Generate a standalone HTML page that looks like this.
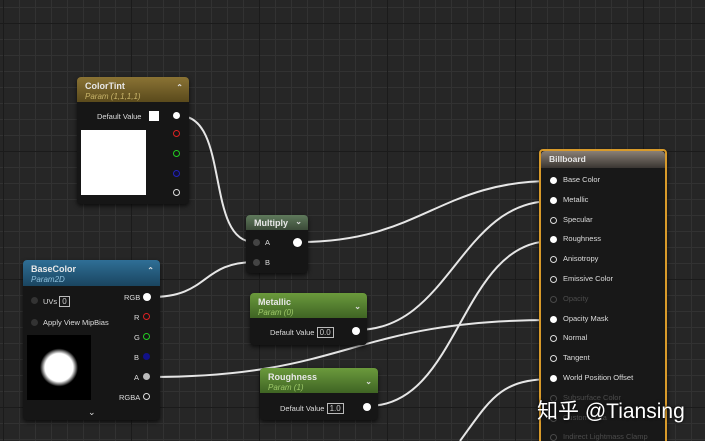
<!DOCTYPE html><html><head><meta charset="utf-8"><style>
html,body{margin:0;width:705px;height:441px;overflow:hidden}
body{background:#262626;font-family:"Liberation Sans",sans-serif;position:relative}
.grid{position:absolute;inset:0;background-image:linear-gradient(#1b1b1b 1px,transparent 1px),linear-gradient(90deg,#1b1b1b 1px,transparent 1px),linear-gradient(#323232 1px,transparent 1px),linear-gradient(90deg,#323232 1px,transparent 1px);background-size:128px 128px,128px 128px,16px 16px,16px 16px;background-position:0 23px,3px 0,0 7px,3px 0}
.n{position:absolute;background:#161616;border-radius:4px;box-shadow:0 2px 4px #000a}
.h{border-radius:4px 4px 0 0;color:#e8e8e8;font-size:9px;font-weight:bold;padding:4px 8px;position:relative}
.h i{display:block;font-style:italic;font-weight:normal;font-size:8px;margin-top:1px}
.t{position:absolute;color:#ddd;font-size:7.5px;white-space:nowrap}
.p{position:absolute;width:7px;height:7px;border-radius:50%;box-sizing:border-box}
.f{background:#fff}.o{border:1.5px solid #ddd}
.box{display:inline-block;border:1px solid #bbb;padding:0 2px;font-size:8px;color:#ccc}
.ch{position:absolute;right:6px;top:6px;color:#ddd;font-size:8px}
</style></head><body><div class="grid"></div>
<svg width="705" height="441" style="position:absolute;left:0;top:0" fill="none" stroke="#e6e6e6" stroke-width="2">
<path d="M180 116 C230 116 205 242 254 242"/>
<path d="M151 297 C210 297 200 262 256 262"/>
<path d="M300 242 C420 242 440 181 552 181"/>
<path d="M357 330 C450 330 460 201 552 201"/>
<path d="M150 377 C350 377 350 320 552 320"/>
<path d="M368 406 C460 406 460 241 552 241"/>
<path d="M460 441 C490 400 500 379 552 379"/>
</svg>
<div class="n" style="left:77px;top:77px;width:112px;height:127px">
<div class="h" style="background:linear-gradient(#8a7334,#5a4a1c);height:17px">ColorTint<i style="color:#c9b56a">Param (1,1,1,1)</i><span class="ch">⌃</span></div>
<div class="t" style="left:20px;top:35px">Default Value</div>
<div style="position:absolute;left:72px;top:34px;width:10px;height:10px;background:#fff"></div>
<div style="position:absolute;left:4px;top:53px;width:65px;height:65px;background:#fff"></div>
<div class="p f" style="left:96px;top:35px"></div>
<div class="p" style="left:96px;top:53px;border:1.5px solid #d22"></div>
<div class="p" style="left:96px;top:73px;border:1.5px solid #2c2"></div>
<div class="p" style="left:96px;top:93px;border:1.5px solid #22b;background:#113"></div>
<div class="p o" style="left:96px;top:112px"></div>
</div>
<div class="n" style="left:246px;top:215px;width:62px;height:58px">
<div class="h" style="background:linear-gradient(#5f7a5c,#3b4a38);height:8px;padding-top:3px">Multiply<span class="ch" style="top:2px">⌄</span></div>
<div class="p" style="left:7px;top:24px;background:#444"></div><div class="t" style="left:19px;top:23px">A</div>
<div class="p" style="left:7px;top:44px;background:#444"></div><div class="t" style="left:19px;top:43px">B</div>
<div class="p f" style="left:47px;top:23px;width:9px;height:9px"></div>
</div>
<div class="n" style="left:23px;top:260px;width:137px;height:160px">
<div class="h" style="background:linear-gradient(#2f6f96,#1a4560);height:18px">BaseColor<i style="color:#8fc1dd">Param2D</i><span class="ch">⌃</span></div>
<div class="p" style="left:8px;top:37px;background:#333"></div><div class="t" style="left:20px;top:36px">UVs <span class="box">0</span></div>
<div class="p" style="left:8px;top:59px;background:#333"></div><div class="t" style="left:20px;top:58px">Apply View MipBias</div>
<div style="position:absolute;left:4px;top:75px;width:64px;height:65px;background:radial-gradient(circle at 50% 50%,#fff 0 14px,#000 19px)"></div>
<div class="t" style="left:101px;top:33px">RGB</div><div class="p f" style="left:120px;top:33px;width:8px;height:8px"></div>
<div class="t" style="left:111px;top:53px">R</div><div class="p" style="left:120px;top:53px;border:1.5px solid #d22"></div>
<div class="t" style="left:111px;top:73px">G</div><div class="p" style="left:120px;top:73px;border:1.5px solid #2c2"></div>
<div class="t" style="left:111px;top:93px">B</div><div class="p" style="left:120px;top:93px;background:#118"></div>
<div class="t" style="left:111px;top:113px">A</div><div class="p" style="left:120px;top:113px;background:#bbb"></div>
<div class="t" style="left:96px;top:133px">RGBA</div><div class="p o" style="left:120px;top:133px"></div>
<div class="t" style="left:65px;top:147px;font-size:9px">⌄</div>
</div>
<div class="n" style="left:250px;top:293px;width:117px;height:52px">
<div class="h" style="background:linear-gradient(#6b9a3c,#3f6424);height:17px">Metallic<i style="color:#9fca6a">Param (0)</i><span class="ch" style="top:9px">⌄</span></div>
<div class="t" style="left:20px;top:34px">Default Value <span class="box">0.0</span></div>
<div class="p f" style="left:102px;top:34px;width:8px;height:8px"></div>
</div>
<div class="n" style="left:260px;top:368px;width:118px;height:52px">
<div class="h" style="background:linear-gradient(#6b9a3c,#3f6424);height:17px">Roughness<i style="color:#9fca6a">Param (1)</i><span class="ch" style="top:9px">⌄</span></div>
<div class="t" style="left:20px;top:35px">Default Value <span class="box">1.0</span></div>
<div class="p f" style="left:103px;top:35px;width:8px;height:8px"></div>
</div>
<div class="n" style="left:539px;top:149px;width:124px;height:300px;border:2px solid #d89a2a;background:#181818">
<div class="h" style="background:linear-gradient(#8a8076,#3a3632);height:11px;padding:3px 8px;font-size:8.5px">Billboard</div>
<div id="rows"></div>
</div>
<div style="position:absolute;left:537px;top:395px;color:#fff;font-size:21px;font-family:'Liberation Sans','Noto Sans CJK SC',sans-serif;text-shadow:0 0 3px #000">知乎 @Tiansing</div>
<script>
var r=[["Base Color",1],["Metallic",1],["Specular",0],["Roughness",1],["Anisotropy",0],["Emissive Color",0],["Opacity",2],["Opacity Mask",1],["Normal",0],["Tangent",0],["World Position Offset",1],["Subsurface Color",2],["Custom Data",2],["Indirect Lightmass Clamp",2]],h="";
r.forEach(function(a,i){var y=29+i*19.8;var c=a[1]==1?"p f":"p o";var st=a[1]==2?"opacity:.25":"";
h+='<div class="'+c+'" style="left:9px;top:'+(y-3)+'px;'+st+'"></div><div class="t" style="left:22px;top:'+(y-5)+'px;'+st+'">'+a[0]+'</div>';});
document.getElementById("rows").innerHTML=h;
</script>
</body></html>
